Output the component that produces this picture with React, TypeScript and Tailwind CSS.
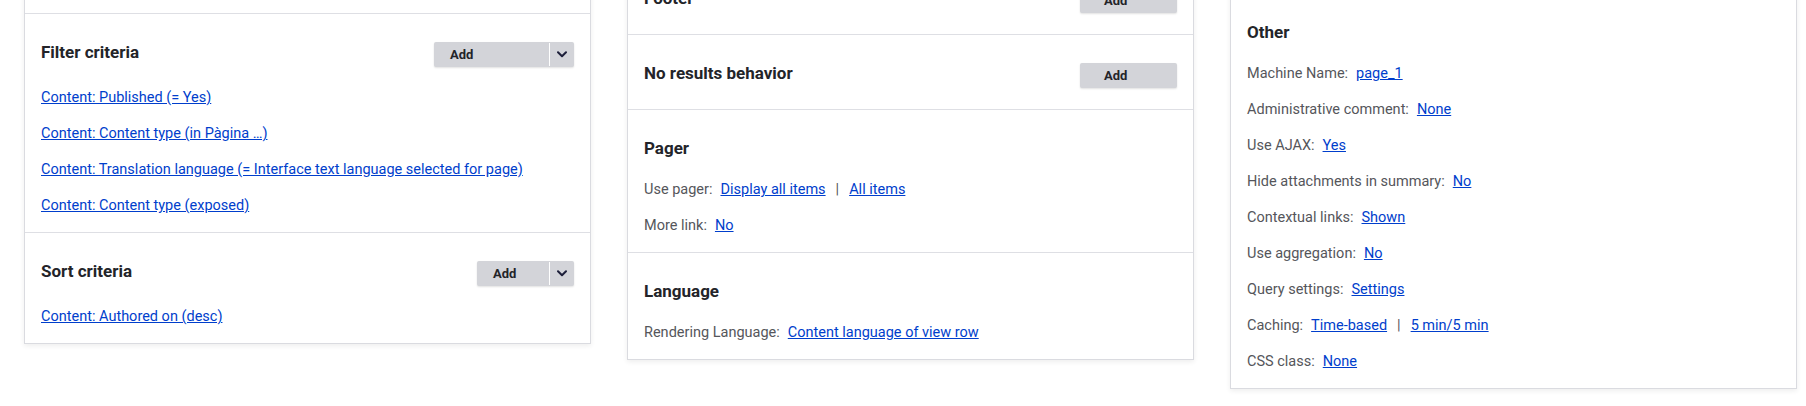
import React from "react";

type Part = { label?: string; links: string[] };

const Chevron = () => (
  <svg width="10" height="7" viewBox="0 0 10 7" fill="none">
    <path d="M1 1.2 L5 5.2 L9 1.2" stroke="#1d1f3a" strokeWidth="2" strokeLinecap="round" strokeLinejoin="round" />
  </svg>
);

const AddButton = ({ main, split }: { main: number; split: boolean }) => {
  if (!split) {
    return (
      <div
        className="mt-[1px] mb-[2px] flex h-[25px] items-center rounded-[2px] bg-[#d3d4d9] pl-[24px] text-[13px] font-bold text-[#232429] shadow-[0_1px_2px_rgba(0,0,0,0.12)]"
        style={{ width: main }}
      >
        Add
      </div>
    );
  }
  return (
    <div className="mt-[1px] mb-[2px] flex h-[25px] rounded-[2px] bg-[#d3d4d9] shadow-[0_1px_2px_rgba(0,0,0,0.12)]">
      <div
        className="flex h-full items-center pl-[16px] text-[13px] font-bold text-[#232429]"
        style={{ width: main }}
      >
        Add
      </div>
      <div className="my-[1px] w-px bg-white" />
      <div className="flex h-full w-[24px] items-center justify-center">
        <Chevron />
      </div>
    </div>
  );
};

const Section = ({
  title,
  button,
  items,
  first,
}: {
  title: string;
  button?: { main: number; split: boolean };
  items?: (string | Part)[];
  first?: boolean;
}) => {
  const hasItems = items && items.length > 0;
  return (
    <div
      className={
        (first ? "" : "border-t border-[#dedfe4] ") +
        "px-[16px] pt-[27px] " +
        (hasItems ? "pb-[8px]" : "pb-[19px]")
      }
    >
      <div className="flex min-h-[24px] items-start justify-between">
        <div className="text-[17px] font-bold leading-[22px] text-[#232429]">{title}</div>
        {button && <AddButton main={button.main} split={button.split} />}
      </div>
      {hasItems && (
        <div className="mt-[11px]">
          {items!.map((item, i) =>
            typeof item === "string" ? (
              <div key={i} className="h-[36px] leading-[35px]">
                <a href="#" className="text-[#003ecc] underline">
                  {item}
                </a>
              </div>
            ) : (
              <div key={i} className="h-[36px] whitespace-nowrap leading-[35px] text-[#55565b]">
                <span>{item.label}</span>
                {item.links.map((l, j) => (
                  <React.Fragment key={j}>
                    {j > 0 && <span className="mx-[10px]">|</span>}
                    <a href="#" className={(j === 0 ? "ml-[8px] " : "") + "text-[#003ecc] underline"}>
                      {l}
                    </a>
                  </React.Fragment>
                ))}
              </div>
            )
          )}
        </div>
      )}
    </div>
  );
};

const Card = ({ className, children }: { className?: string; children: React.ReactNode }) => (
  <div
    className={
      "w-[567px] shrink-0 border border-[#dadbe0] bg-white shadow-[0_2px_5px_rgba(0,0,0,0.07)] " +
      (className ?? "")
    }
  >
    {children}
  </div>
);

export default function App() {
  return (
    <div className="h-[406px] overflow-hidden bg-white font-['Roboto',sans-serif] text-[14.5px]">
      <div className="-mt-[98px] flex items-start gap-[36px] pl-[24px]">
        <Card>
          <Section first title="Fields" button={{ main: 115, split: true }} items={["Content: Title"]} />
          <Section
            title="Filter criteria"
            button={{ main: 115, split: true }}
            items={[
              "Content: Published (= Yes)",
              "Content: Content type (in Pàgina …)",
              "Content: Translation language (= Interface text language selected for page)",
              "Content: Content type (exposed)",
            ]}
          />
          <Section
            title="Sort criteria"
            button={{ main: 72, split: true }}
            items={["Content: Authored on (desc)"]}
          />
        </Card>
        <Card className="mt-[57px]">
          <Section first title="Footer" button={{ main: 97, split: false }} />
          <Section title="No results behavior" button={{ main: 97, split: false }} />
          <Section
            title="Pager"
            items={[
              { label: "Use pager:", links: ["Display all items", "All items"] },
              { label: "More link:", links: ["No"] },
            ]}
          />
          <Section
            title="Language"
            items={[{ label: "Rendering Language:", links: ["Content language of view row"] }]}
          />
        </Card>
        <Card className="mt-[91px]">
          <Section
            first
            title="Other"
            items={[
              { label: "Machine Name:", links: ["page_1"] },
              { label: "Administrative comment:", links: ["None"] },
              { label: "Use AJAX:", links: ["Yes"] },
              { label: "Hide attachments in summary:", links: ["No"] },
              { label: "Contextual links:", links: ["Shown"] },
              { label: "Use aggregation:", links: ["No"] },
              { label: "Query settings:", links: ["Settings"] },
              { label: "Caching:", links: ["Time-based", "5 min/5 min"] },
              { label: "CSS class:", links: ["None"] },
            ]}
          />
        </Card>
      </div>
    </div>
  );
}
